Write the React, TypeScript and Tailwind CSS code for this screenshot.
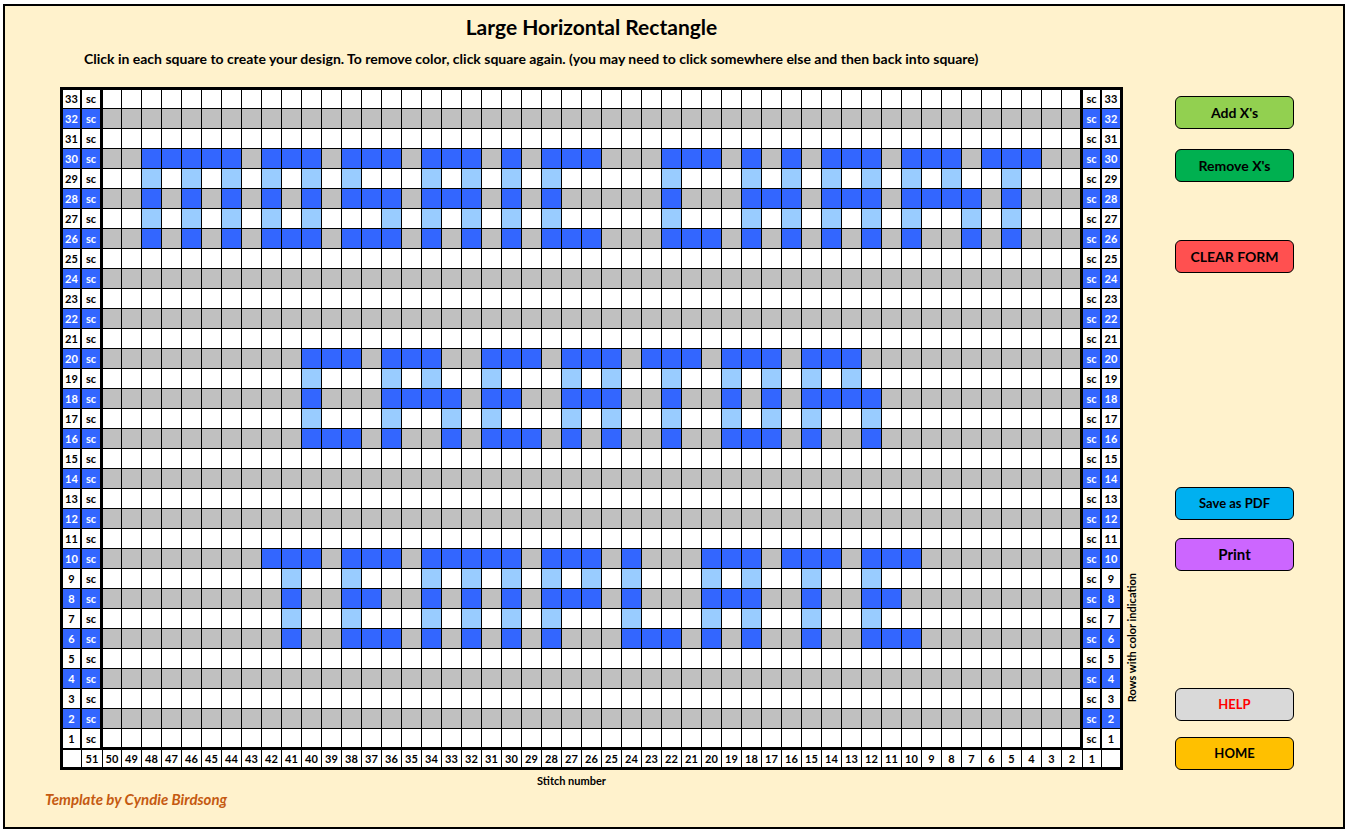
import { useState } from "react";
import clsx from "clsx";

const TOP_ROW = 33;
const rows = Array.from({ length: TOP_ROW }, (_, i) => TOP_ROW - i);
const stitches = Array.from({ length: 49 }, (_, i) => 50 - i);

// Filled stitches per row, written as stitch numbers and ranges.
const design: Record<number, string> = {
  30: "48-44 42-40 38-36 34-32 30 28-26 22-20 18 16 14-12 10-8 6-4",
  29: "48 46 44 42 40 38 34 32 30 28 22 18 16 14 12 10 8 5",
  28: "48 46 44 42 40 38-36 34-32 30 28 22 18-16 14-12 10-7 5",
  27: "48 46 44 42 40 36 34 32 30 28 22 18 16 14 12 10 7 5",
  26: "48 46 44 42-40 38-36 34 32 30 28-26 22-20 18 16 14 12 10 7 5",
  20: "40-38 36-34 31-29 27-25 23-21 19-17 15-13",
  19: "40 36 34 31 27 25 22 19 17 15 13",
  18: "40 36-33 31-30 27-25 22 19 17 15-12",
  17: "40 36 33 31 27 25 22 19 17 15 12",
  16: "40-38 36 33 31-29 27 25 22 19-17 15 12",
  10: "42-40 38-36 34-30 28-26 24 20-18 16-14 12-10",
  9: "41 38 34 32 30 28 26 24 20 18 15 12",
  8: "41 38-37 34 32 30 28-26 24 20-18 15 12-11",
  7: "41 38 34 32 30 28 24 20 18 15 12",
  6: "41 38-36 34 32 30 28 24-22 20 18 15 12-10",
};

const key = (row: number, stitch: number) => `${row}:${stitch}`;

function initialCells() {
  const cells = new Set<string>();
  for (const [row, spans] of Object.entries(design)) {
    for (const span of spans.split(" ")) {
      const [from, to = from] = span.split("-").map(Number);
      for (let s = from; s >= to; s--) cells.add(key(Number(row), s));
    }
  }
  return cells;
}

function cellColor(row: number, filled: boolean) {
  const even = row % 2 === 0;
  if (filled) return even ? "bg-[#3366ff]" : "bg-[#99ccff]";
  return even ? "bg-[#c0c0c0]" : "bg-white";
}

function ActionButton({
  label,
  className,
  onClick,
}: {
  label: string;
  className: string;
  onClick?: () => void;
}) {
  return (
    <button
      type="button"
      onClick={onClick}
      className={clsx(
        "h-[33px] w-full cursor-pointer rounded-md border border-black font-bold",
        className,
      )}
    >
      {label}
    </button>
  );
}

export default function App() {
  const [cells, setCells] = useState(initialCells);
  const [showX, setShowX] = useState(false);

  const toggle = (id: string) =>
    setCells((prev) => {
      const next = new Set(prev);
      if (!next.delete(id)) next.add(id);
      return next;
    });

  return (
    <div className="bg-white pt-1 pr-[5px] pb-1.5 pl-[3px] font-['Lato','Noto_Sans',sans-serif] font-bold text-black">
      <div className="border-2 border-black bg-[#fff2cc] pb-[18px]">
        <div className="flex">
          <main className="min-w-0 flex-1 pl-[55px]">
            <h1 className="mt-[7px] text-center text-[21px] leading-7">
              Large Horizontal Rectangle
            </h1>
            <p className="mt-2 pl-6 text-sm leading-5">
              Click in each square to create your design. To remove color, click square again. (you
              may need to click somewhere else and then back into square)
            </p>
            <table className="mt-[18px] w-full table-fixed border-separate border-spacing-0 border-[3px] border-black text-center text-[11px] leading-4">
              <colgroup>
                <col className="w-[19px]" />
                <col className="w-[21px]" />
                {stitches.map((s) => (
                  <col key={s} className={clsx(s === 50 && "w-[19px]", s === 2 && "w-[21px]")} />
                ))}
                <col className="w-[19px]" />
                <col className="w-[18px]" />
              </colgroup>
              <tbody>
                {rows.map((row) => {
                  const last = row === 1;
                  const label = clsx(
                    "border-black p-0",
                    last ? "border-b-2" : "border-b",
                    row % 2 === 0 ? "bg-[#3366ff] text-white" : "bg-white",
                  );
                  return (
                    <tr key={row} className={last ? "h-[21px]" : row === TOP_ROW ? "h-[19px]" : "h-5"}>
                      <th scope="row" className={clsx(label, "border-r-2")}>
                        {row}
                      </th>
                      <td className={clsx(label, "border-r-[3px]")}>sc</td>
                      {stitches.map((s) => {
                        const filled = cells.has(key(row, s));
                        return (
                          <td
                            key={s}
                            className={clsx(
                              "border-black p-0",
                              last ? "border-b-[3px]" : "border-b",
                              s === 2 ? "border-r-[3px]" : "border-r",
                              cellColor(row, filled),
                            )}
                          >
                            <button
                              type="button"
                              aria-label={`Row ${row}, stitch ${s}`}
                              aria-pressed={filled}
                              onClick={() => toggle(key(row, s))}
                              className="block h-[18px] w-full cursor-pointer"
                            >
                              {showX && filled ? "X" : null}
                            </button>
                          </td>
                        );
                      })}
                      <td className={clsx(label, "border-r-2")}>sc</td>
                      <td className={label}>{row}</td>
                    </tr>
                  );
                })}
                <tr className="h-[17px] bg-white">
                  <td className="border-r border-black p-0" />
                  {[51, ...stitches, 1].map((s) => (
                    <td key={s} className="border-r border-black p-0">
                      {s}
                    </td>
                  ))}
                  <td className="p-0" />
                </tr>
              </tbody>
            </table>
            <p className="mt-[3px] pr-10 text-center text-[11px] leading-4">Stitch number</p>
          </main>
          <div className="flex w-4 items-end justify-center pb-[87px] pl-0.5">
            <span className="rotate-180 text-[11px] leading-4 whitespace-nowrap [writing-mode:vertical-rl]">
              Rows with color indication
            </span>
          </div>
          <aside className="mt-[90px] mr-[49px] ml-9 flex w-[119px] flex-col text-sm">
            <div className="flex flex-col gap-5">
              <ActionButton
                label="Add X's"
                className="bg-[#92d050]"
                onClick={() => setShowX(true)}
              />
              <ActionButton
                label="Remove X's"
                className="bg-[#00b050]"
                onClick={() => setShowX(false)}
              />
            </div>
            <div className="mt-[58px]">
              <ActionButton
                label="CLEAR FORM"
                className="bg-[#ff5050]"
                onClick={() => setCells(new Set())}
              />
            </div>
            <div className="mt-[214px] flex flex-col gap-[18px]">
              <ActionButton label="Save as PDF" className="bg-[#00b0f0] text-[13px]" />
              <ActionButton
                label="Print"
                className="bg-[#cc66ff] text-[15px]"
                onClick={() => window.print()}
              />
            </div>
            <div className="mt-[117px] flex flex-col gap-4">
              <ActionButton label="HELP" className="bg-[#d9d9d9] text-[13px] text-[#ff0000]" />
              <ActionButton label="HOME" className="bg-[#ffc000] text-[13px]" />
            </div>
          </aside>
        </div>
        <p className="pl-10 text-[15px] leading-5 text-[#c55a11] italic">
          Template by Cyndie Birdsong
        </p>
      </div>
    </div>
  );
}
